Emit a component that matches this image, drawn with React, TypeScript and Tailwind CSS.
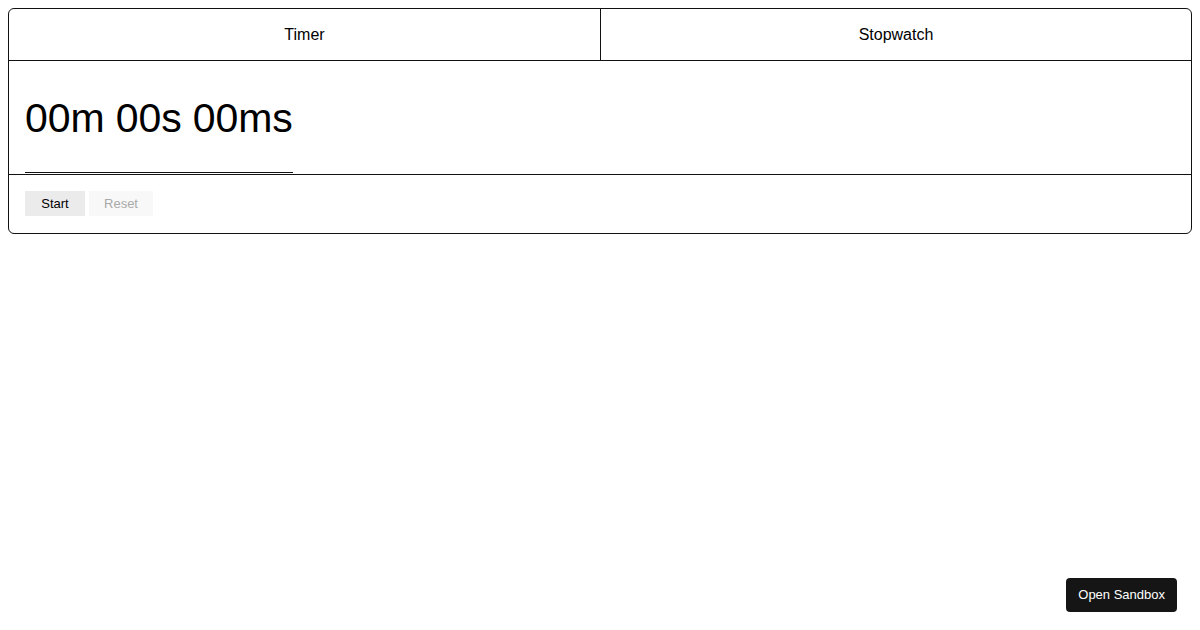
import { useState } from "react";

export default function App() {
  const [tab, setTab] = useState<"timer" | "stopwatch">("timer");

  return (
    <div className="min-h-screen bg-white p-2 font-['Liberation_Sans',Arial,sans-serif] text-black">
      <div className="overflow-hidden rounded-md border border-[#111]">
        {/* Tabs */}
        <div className="grid grid-cols-2 border-b border-[#111]">
          <button onClick={() => setTab("timer")} className="h-[51px] text-base">
            Timer
          </button>
          <button
            onClick={() => setTab("stopwatch")}
            className="h-[51px] border-l border-[#111] text-base"
          >
            Stopwatch
          </button>
        </div>

        {/* Display */}
        <div className="border-b border-[#111] px-4 pt-[34px] pb-px">
          <div className="inline-block border-b border-[#111] pb-[30px] text-[41px] leading-[47px] tracking-[-0.1px]">
            00m 00s 00ms
          </div>
        </div>

        {/* Controls */}
        <div className="flex gap-1 px-4 pt-4 pb-[17px]">
          <button className="h-[25px] w-[60px] bg-[#ebebeb] text-[13px] text-black">Start</button>
          <button disabled className="h-[25px] w-[64px] bg-[#f8f8f8] text-[13px] text-[#a9a9a9]">
            Reset
          </button>
        </div>
      </div>

      <button className="fixed right-[23px] bottom-[18px] h-[34px] rounded bg-[#151515] px-3 text-[13px] text-white">
        Open Sandbox
      </button>
    </div>
  );
}
